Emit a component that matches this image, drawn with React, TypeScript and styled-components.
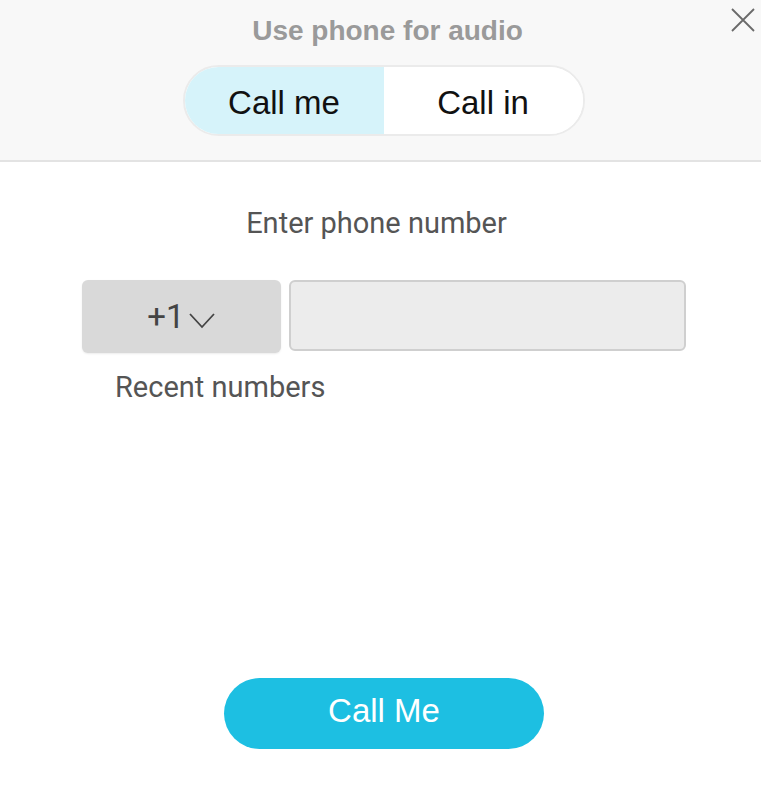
import styled, { createGlobalStyle } from "styled-components";

const GlobalStyle = createGlobalStyle`
  html, body {
    margin: 0;
    padding: 0;
    background: #ffffff;
  }
  body {
    font-family: "Liberation Sans", Arial, sans-serif;
  }
`;

export default function App() {
  return (
    <>
      <GlobalStyle />
      <Page>
        <Header>
          <Title>Use phone for audio</Title>
          <Toggle>
            <Segment $active>Call me</Segment>
            <Segment>Call in</Segment>
          </Toggle>
          <Close aria-label="Close">
            <svg width="26" height="26" viewBox="0 0 26 26">
              <path d="M2 2 L24 24 M24 2 L2 24" stroke="#6a6a6a" strokeWidth="1.8" fill="none" />
            </svg>
          </Close>
        </Header>
        <Body>
          <Label>Enter phone number</Label>
          <PhoneRow>
            <CountrySelect>
              +1
              <svg width="28" height="18" viewBox="0 0 28 18">
                <path d="M2 3 L14 16 L26 3" stroke="#444" strokeWidth="1.8" fill="none" />
              </svg>
            </CountrySelect>
            <NumberInput />
          </PhoneRow>
          <Recent>Recent numbers</Recent>
          <Spacer />
          <CallButton>Call Me</CallButton>
        </Body>
      </Page>
    </>
  );
}

const Page = styled.div`
  width: 761px;
  height: 785px;
  display: flex;
  flex-direction: column;
  background: #ffffff;
  overflow: hidden;
`;

const Header = styled.div`
  position: relative;
  display: flex;
  flex-direction: column;
  align-items: center;
  background: #f8f8f8;
  border-bottom: 2px solid #e3e3e3;
  padding: 13px 0 24px;
  height: 162px;
  box-sizing: border-box;
`;

const Title = styled.div`
  font-family: "Liberation Sans", Arial, sans-serif;
  font-weight: bold;
  font-size: 28px;
  line-height: 36px;
  color: #9a9a9a;
  margin-left: 14px;
`;

const Toggle = styled.div`
  display: flex;
  margin-top: 16px;
  margin-left: 6px;
  width: 402px;
  height: 72px;
  border: 2px solid #ebebeb;
  border-radius: 36px;
  overflow: hidden;
  box-sizing: border-box;
  background: #ffffff;
`;

const Segment = styled.div<{ $active?: boolean }>`
  flex: 1;
  display: flex;
  align-items: center;
  justify-content: center;
  padding-top: 4px;
  font-size: 33px;
  color: #111111;
  background: ${(p) => (p.$active ? "#d6f3fa" : "#ffffff")};
`;

const Close = styled.div`
  position: absolute;
  top: 7px;
  right: 5px;
  width: 26px;
  height: 26px;
`;

const Body = styled.div`
  flex: 1;
  display: flex;
  flex-direction: column;
  padding: 42px 0 36px;
`;

const Label = styled.div`
  font-family: Roboto, "Liberation Sans", sans-serif;
  font-size: 29px;
  line-height: 38px;
  color: #555555;
  text-align: center;
  padding-right: 8px;
`;

const PhoneRow = styled.div`
  display: flex;
  gap: 8px;
  margin: 38px 0 0 82px;
`;

const CountrySelect = styled.div`
  width: 199px;
  height: 73px;
  display: flex;
  align-items: center;
  justify-content: center;
  gap: 3px;
  background: #d9d9d9;
  border-radius: 6px;
  box-shadow: 0 1px 2px rgba(0, 0, 0, 0.08);
  font-family: Roboto, "Liberation Sans", sans-serif;
  font-size: 33px;
  color: #444444;

  svg {
    margin-top: 6px;
  }
`;

const NumberInput = styled.input`
  width: 397px;
  height: 71px;
  box-sizing: border-box;
  background: #ececec;
  border: 2px solid #cfcfcf;
  border-radius: 6px;
  outline: none;
`;

const Recent = styled.div`
  font-family: Roboto, "Liberation Sans", sans-serif;
  font-size: 29px;
  line-height: 38px;
  color: #555555;
  margin: 15px 0 0 115px;
`;

const Spacer = styled.div`
  flex: 1;
`;

const CallButton = styled.button`
  align-self: flex-start;
  margin-left: 224px;
  width: 320px;
  height: 71px;
  border: none;
  border-radius: 36px;
  background: #1dbfe2;
  color: #ffffff;
  font-family: "Liberation Sans", Arial, sans-serif;
  font-size: 33px;
  padding-bottom: 6px;
`;
